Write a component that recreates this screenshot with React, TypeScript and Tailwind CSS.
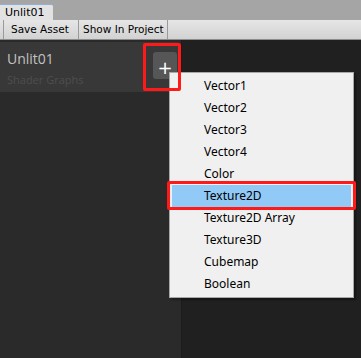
import React from "react";

const items = [
  "Vector1",
  "Vector2",
  "Vector3",
  "Vector4",
  "Color",
  "Texture2D",
  "Texture2D Array",
  "Texture3D",
  "Cubemap",
  "Boolean",
];

export default function App() {
  return (
    <div className="relative w-[361px] h-[358px] overflow-hidden bg-[#202020] font-['DejaVu_Sans',sans-serif]">
      {/* window tab strip */}
      <div className="h-[20px] bg-[#a5a5a5] flex items-end">
        <div className="h-[16px] w-[53px] bg-[#e2e2e2] border-t border-[#8fb0d8] rounded-tr-[2px] pl-[5px] text-[11px] leading-[15px] text-black">
          Unlit01
        </div>
      </div>

      {/* toolbar */}
      <div className="h-[20px] bg-gradient-to-b from-[#e6e6e6] to-[#d2d2d2] border-b border-[#8c8c8c] flex items-stretch text-[10.5px] text-black">
        <div className="w-[4px] border-r border-[#9a9a9a]" />
        <div className="w-[75px] border-r border-[#9a9a9a] pl-[7px] leading-[19px]">Save Asset</div>
        <div className="w-[89px] border-r border-[#9a9a9a] pl-[4px] leading-[19px]">Show In Project</div>
      </div>

      <div className="flex h-[318px]">
        {/* left blackboard panel */}
        <div className="w-[182px] bg-[#2a2a2a] border-r border-[#1c1c1c] pt-[2px]">
          <div className="h-[50px] w-[180px] bg-[#383838] rounded-tr-[3px] flex justify-between pl-[7px] pr-[3px] pt-[8px]">
            <div>
              <div className="text-[14px] leading-[18px] text-[#c2c2c2] font-['Open_Sans',sans-serif]">Unlit01</div>
              <div className="text-[11px] leading-[14px] mt-[5px] text-[#4e4e4e] font-['Open_Sans',sans-serif]">Shader Graphs</div>
            </div>
            <div className="mt-[2px] w-[24px] h-[27px] rounded-[3px] bg-[#565656] flex items-center justify-center text-white text-[18px] leading-none pt-[4px]">
              +
            </div>
          </div>
        </div>
        <div className="flex-1" />
      </div>

      {/* context menu */}
      <div className="absolute left-[169px] top-[72px] w-[185px] h-[226px] bg-[#f0f0f0] border border-[#a8a8a8] shadow-[2px_2px_2px_rgba(0,0,0,0.35)] pt-[2px] px-[2px] font-['Noto_Sans',sans-serif]">
        {items.map((it) => (
          <div
            key={it}
            className={`h-[22px] pl-[32px] text-[12px] leading-[22px] text-black ${
              it === "Texture2D" ? "bg-[#91c9f7]" : ""
            }`}
          >
            {it}
          </div>
        ))}
      </div>

      {/* annotation boxes */}
      <div className="absolute left-[143px] top-[43px] w-[38px] h-[48px] border-[3px] border-[#ff1a1a] rounded-[2px]" />
      <div className="absolute left-[167px] top-[181px] w-[189px] h-[29px] border-[3px] border-[#ff1a1a] rounded-[2px]" />
    </div>
  );
}
